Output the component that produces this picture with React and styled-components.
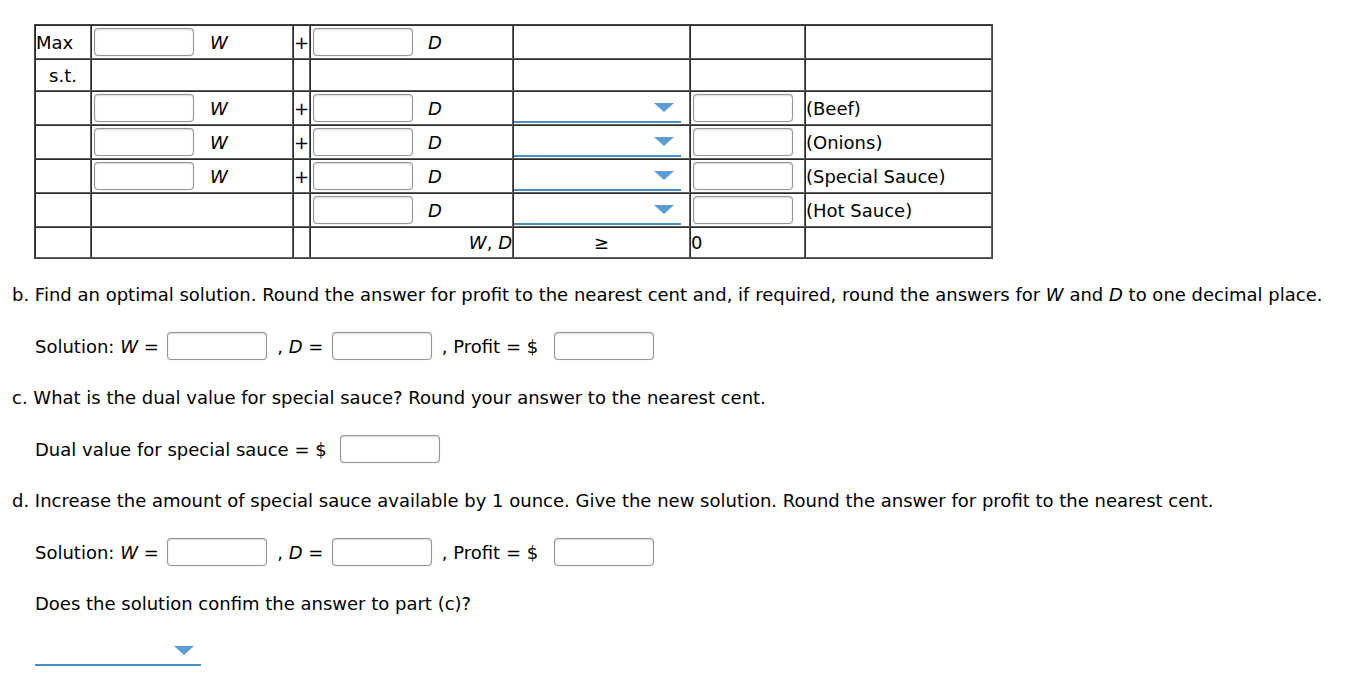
import React from "react";
import styled, { createGlobalStyle } from "styled-components";

const GlobalStyle = createGlobalStyle`
  body {
    margin: 0;
    background: #fff;
    color: #000;
    font-family: "DejaVu Sans", Verdana, sans-serif;
    font-size: 18px;
  }
`;

const Page = styled.div`
  padding: 24px 0 0 12px;
`;

const Grid = styled.table`
  margin-left: 22px;
  box-sizing: border-box;
  width: 959px;
  table-layout: fixed;
  border-collapse: separate;
  border-spacing: 0;
  border: 1px solid #444;
  margin-bottom: 10px;
`;

const Col = styled.col`
  width: ${(p) => p.$w}px;
`;

const Row = styled.tr`
  height: ${(p) => p.$h}px;
`;

const Cell = styled.td`
  box-sizing: border-box;
  padding: 0;
  border-top: 1px solid #2a2a2a;
  border-left: 1px solid #2a2a2a;
  border-right: 1px solid #5f5f5f;
  border-bottom: 1px solid #5f5f5f;
  text-align: ${(p) => p.$align || "left"};
  vertical-align: middle;
  white-space: nowrap;
`;

const Term = styled.div`
  display: flex;
  align-items: center;
`;

const Var = styled.i`
  font-style: italic;
  margin-left: ${(p) => p.$ml || 0}px;
`;

const Blank = styled.input.attrs({ type: "text" })`
  box-sizing: border-box;
  width: 100px;
  height: 28px;
  margin: 0 ${(p) => p.$mr || 0}px 0 ${(p) => p.$ml || 0}px;
  padding: 0 4px;
  border: 1px solid #959595;
  border-radius: 4px;
  background: #fff;
  box-shadow: inset 0 1px 2px rgba(0, 0, 0, 0.15), 0 0 1px rgba(0, 0, 0, 0.25);
  font: inherit;
  outline: none;
`;

const Select = styled.div`
  box-sizing: border-box;
  width: ${(p) => p.$w}px;
  height: 30px;
  margin-top: ${(p) => p.$mt || 0}px;
  display: flex;
  align-items: center;
  justify-content: flex-end;
  padding-right: ${(p) => p.$pr || 7}px;
  border-bottom: 2px solid #4b8cc6;
`;

const Caret = styled.span`
  width: 0;
  height: 0;
  border-left: ${(p) => p.$size}px solid transparent;
  border-right: ${(p) => p.$size}px solid transparent;
  border-top: 9px solid #5b9dd3;
`;

const Line = styled.div`
  height: 51.5px;
  display: flex;
  align-items: ${(p) => (p.$end ? "flex-start" : "center")};
  padding-left: ${(p) => (p.$indent ? 23 : 0)}px;
  white-space: pre;
`;

const Dropdown = ({ w, mt, size = 10 }) => (
  <Select $w={w} $mt={mt}>
    <Caret $size={size} />
  </Select>
);

const Solution = () => (
  <Line $indent>
    Solution: <i>W</i> = <Blank $ml={3} $mr={4} /> , <i>D</i> = <Blank $ml={3} $mr={4} /> , Profit = ${" "}
    <Blank $ml={10} />
  </Line>
);

const cols = [56, 202, 17, 203, 177, 115, 187];

const constraints = ["(Beef)", "(Onions)", "(Special Sauce)"];

const App = () => (
  <>
    <GlobalStyle />
    <Page>
      <Grid>
        <colgroup>
          {cols.map((w, i) => (
            <Col key={i} $w={w} />
          ))}
        </colgroup>
        <tbody>
          <Row $h={34}>
            <Cell>Max</Cell>
            <Cell>
              <Term>
                <Blank $ml={2} />
                <Var $ml={16}>W</Var>
              </Term>
            </Cell>
            <Cell $align="center">+</Cell>
            <Cell>
              <Term>
                <Blank $ml={2} />
                <Var $ml={15}>D</Var>
              </Term>
            </Cell>
            <Cell />
            <Cell />
            <Cell />
          </Row>
          <Row $h={32}>
            <Cell $align="center">s.t.</Cell>
            <Cell />
            <Cell />
            <Cell />
            <Cell />
            <Cell />
            <Cell />
          </Row>
          {constraints.map((label) => (
            <Row $h={34} key={label}>
              <Cell />
              <Cell>
                <Term>
                  <Blank $ml={2} />
                  <Var $ml={16}>W</Var>
                </Term>
              </Cell>
              <Cell $align="center">+</Cell>
              <Cell>
                <Term>
                  <Blank $ml={2} />
                  <Var $ml={15}>D</Var>
                </Term>
              </Cell>
              <Cell>
                <Dropdown w={167} />
              </Cell>
              <Cell>
                <Blank $ml={2} />
              </Cell>
              <Cell>{label}</Cell>
            </Row>
          ))}
          <Row $h={34}>
            <Cell />
            <Cell />
            <Cell />
            <Cell>
              <Term>
                <Blank $ml={2} />
                <Var $ml={15}>D</Var>
              </Term>
            </Cell>
            <Cell>
              <Dropdown w={167} />
            </Cell>
            <Cell>
              <Blank $ml={2} />
            </Cell>
            <Cell>(Hot Sauce)</Cell>
          </Row>
          <Row $h={31}>
            <Cell />
            <Cell />
            <Cell />
            <Cell $align="right">
              <i>W</i>, <i>D</i>
            </Cell>
            <Cell $align="center">≥</Cell>
            <Cell>0</Cell>
            <Cell />
          </Row>
        </tbody>
      </Grid>

      <Line>
        b. Find an optimal solution. Round the answer for profit to the nearest cent and, if required,
        round the answers for <i>W</i> and <i>D</i> to one decimal place.
      </Line>
      <Solution />
      <Line>c. What is the dual value for special sauce? Round your answer to the nearest cent.</Line>
      <Line $indent>
        Dual value for special sauce = $ <Blank $ml={8} />
      </Line>
      <Line>
        d. Increase the amount of special sauce available by 1 ounce. Give the new solution. Round the
        answer for profit to the nearest cent.
      </Line>
      <Solution />
      <Line $indent>Does the solution confim the answer to part (c)?</Line>
      <Line $indent $end>
        <Dropdown w={166} mt={6.5} />
      </Line>
    </Page>
  </>
);

export default App;
